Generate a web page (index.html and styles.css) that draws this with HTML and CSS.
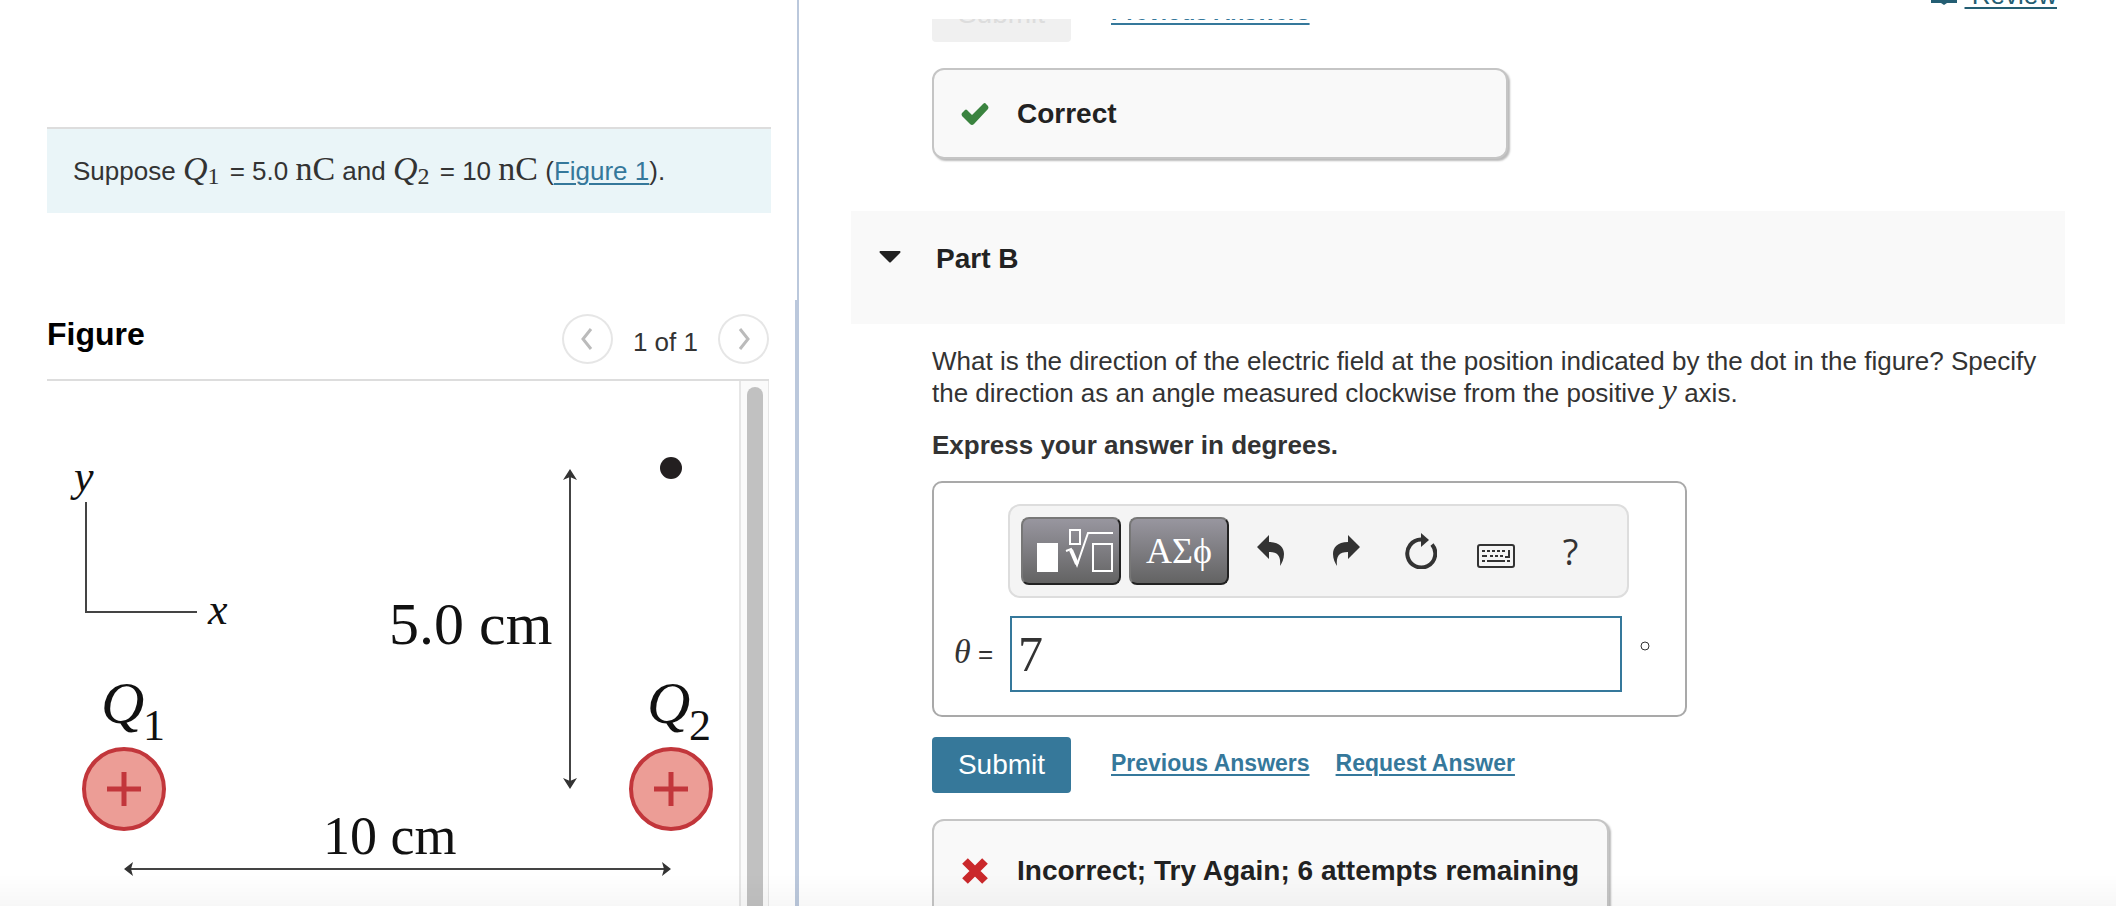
FILE: index.html
```
<!DOCTYPE html>
<html lang="en">
<head>
  <meta charset="UTF-8">
  <meta name="viewport" content="width=device-width, initial-scale=1.0">
  <title>Part B - Electric field of two charges</title>
  <link rel="stylesheet" href="styles.css">
</head>
<body>
  <div class="layout">
    <aside class="left">
      <section class="problem">
        <p class="intro">Suppose <span class="math"><i>Q</i><sub>1</sub></span> = 5.0 <span class="math">nC</span> and <span class="math"><i>Q</i><sub>2</sub></span> = 10 <span class="math">nC</span> (<a href="#figure">Figure 1</a>).</p>
      </section>

      <section class="figure-pane" id="figure">
        <div class="figure-head">
          <h2>Figure</h2>
          <div class="pager">
            <button type="button" aria-label="Previous figure">
              <svg width="14" height="24" viewBox="0 0 14 24"><path d="M11 2 3 12l8 10"/></svg>
            </button>
            <span>1 of 1</span>
            <button type="button" aria-label="Next figure">
              <svg width="14" height="24" viewBox="0 0 14 24"><path d="m3 2 8 10-8 10"/></svg>
            </button>
          </div>
        </div>
        <div class="figure-body">
          <svg class="diagram" viewBox="0 0 692 525" role="img" aria-label="Two positive charges 10 cm apart">
            <!-- axes -->
            <path class="line" d="M39 121v110h111"/>
            <text class="axis" x="27" y="110">y</text>
            <text class="axis" x="161" y="243">x</text>

            <!-- distances -->
            <path class="line" d="M523 94v308"/>
            <path class="head" d="m523 88 7 11-7-3-7 3zM523 408l7-11-7 3-7-3z"/>
            <path class="line" d="M84 488h534"/>
            <path class="head" d="m77 488 9-7-2 7 2 7zM624 488l-9-7 2 7-2 7z"/>
            <text class="dist" x="342" y="263">5.0 cm</text>
            <text class="dist small" x="276" y="473">10 cm</text>

            <circle class="dot" cx="624" cy="87" r="11"/>

            <!-- charges -->
            <text class="charge-name" x="54" y="342">Q</text>
            <text class="charge-sub" x="96" y="359">1</text>
            <text class="charge-name" x="600" y="342">Q</text>
            <text class="charge-sub" x="642" y="359">2</text>
            <circle class="charge" cx="77" cy="408" r="40"/>
            <path class="plus" d="M60 408h34M77 391v34"/>
            <circle class="charge" cx="624" cy="408" r="40"/>
            <path class="plus" d="M607 408h34M624 391v34"/>
          </svg>
          <div class="scrollbar"><div class="thumb"></div></div>
        </div>
      </section>
    </aside>

    <main class="right">
      <header class="topbar">
        <svg width="26" height="24" viewBox="0 0 26 24"><path d="M0 2q7-3 12 1h2q5-4 12-1v20H16l-3 2-3-2H0z"/></svg>
        <a href="#review">&nbsp;Review</a>
      </header>

      <div class="content">
        <div class="actions first">
          <button type="button" class="submit" disabled>Submit</button>
          <a href="#previous-a">Previous Answers</a>
        </div>
        <div class="feedback correct">
          <svg width="28" height="24" viewBox="0 0 28 24"><path fill="#3a833f" d="M1 11 4 8q1-1 2 0l5 5L22 2q2-2 3 0l2 2q1 2 0 3L13 22q-2 2-4 0L1 14q-1-2 0-3z"/></svg>
          <span>Correct</span>
        </div>

        <div class="part-head">
          <svg width="22" height="12" viewBox="0 0 22 12"><path d="M1 0h20q1 1 0 2l-9 9q-1 1-2 0L1 2q-1-1 0-2z"/></svg>
          <h1>Part B</h1>
        </div>

        <div class="part-body">
          <p>What is the direction of the electric field at the position indicated by the dot in the figure? Specify the direction as an angle measured clockwise from the positive <i class="math">y</i> axis.</p>
          <p class="instructions">Express your answer in degrees.</p>

          <div class="answer">
            <div class="toolbar">
              <button type="button" class="key" aria-label="Templates">
                <svg width="96" height="64" viewBox="1 2 96 64">
                  <path class="fill" d="M15 26h21v29H15z"/>
                  <path d="M48 13h10v14H48zM71 27h19v27H71zM44 34l5-2 6 16L66 16h25"/>
                  <path class="thick" d="m49 33 6 14"/>
                </svg>
              </button>
              <button type="button" class="key">ΑΣϕ</button>
              <button type="button" class="icon" aria-label="Undo">
                <svg width="28" height="32" viewBox="0 0 28 32"><path d="M0 12 12 0v7c11 0 15 6 15 12 0 5-2 9-4 12 1-10-2-14-11-14v7z"/></svg>
              </button>
              <button type="button" class="icon" aria-label="Redo">
                <svg width="28" height="32" viewBox="0 0 28 32"><path d="M28 12 16 0v7C5 7 1 13 1 19c0 5 2 9 4 12-1-10 2-14 11-14v7z"/></svg>
              </button>
              <button type="button" class="icon" aria-label="Reset">
                <svg width="32" height="36" viewBox="0 0 32 36"><path class="ring" d="M16 6.500a14 14 0 1 0 11 5"/><path d="m16 0 8 7-8 7z"/></svg>
              </button>
              <button type="button" class="icon keyboard" aria-label="Keyboard shortcuts">
                <svg width="38" height="24" viewBox="0 0 38 24">
                  <rect class="frame" x="1" y="1" width="36" height="22" rx="2"/>
                  <path d="M5 6h3v2H5zM10 6h3v2h-3zM15 6h3v2h-3zM20 6h3v2h-3zM25 6h3v2h-3zM31 6h2v8h-5v-2h3zM5 11h5v2H5zM13 11h3v2h-3zM18 11h3v2h-3zM23 11h3v2h-3zM5 16h3v2H5zM10 16h18v2H10zM30 16h3v2h-3z"/>
                </svg>
              </button>
              <button type="button" class="icon help" aria-label="Help">?</button>
            </div>
            <div class="entry">
              <label for="theta"><i class="math">θ</i> =</label>
              <input type="text" id="theta" value="7">
              <svg class="degree" width="10" height="10" viewBox="0 0 10 10"><circle cx="5" cy="5" r="4"/></svg>
            </div>
          </div>

          <div class="actions">
            <button type="button" class="submit">Submit</button>
            <a href="#previous-b">Previous Answers</a>
            <a href="#request">Request Answer</a>
          </div>
        </div>

        <div class="feedback incorrect">
          <svg width="28" height="28" viewBox="0 0 28 28"><path fill="none" stroke="#ca282b" stroke-width="8" d="m4 4 20 20M24 4 4 24"/></svg>
          <span>Incorrect; Try Again; 6 attempts remaining</span>
        </div>
      </div>
    </main>
  </div>
</body>
</html>
```
FILE: styles.css
```
* {
  box-sizing: border-box;
}
body {
  margin: 0;
  font-family: "Liberation Sans", Arial, sans-serif;
  font-size: 26px;
  line-height: 32px;
  color: #333;
  background: #fff;
  overflow: hidden;
}
body::after {
  content: "";
  position: fixed;
  left: 0;
  right: 0;
  bottom: 0;
  height: 32px;
  background: linear-gradient(rgba(0, 0, 0, 0), rgba(0, 0, 0, 0.03));
  pointer-events: none;
}
h1, h2, p {
  margin: 0;
}
a {
  color: #35789b;
  text-decoration-thickness: 2px;
  text-underline-offset: 3px;
}
button {
  font-family: inherit;
  padding: 0;
  cursor: pointer;
}
svg {
  display: block;
  flex: none;
}
.math {
  font-family: "Liberation Serif", "Times New Roman", serif;
  font-size: 34px;
  line-height: 26px;
}
.math sub {
  font-size: 24px;
  line-height: 0;
  vertical-align: -4px;
  margin-right: 3px;
}
.layout {
  display: flex;
  height: 100vh;
}

/* left side */
.left {
  flex: 0 0 799px;
  display: flex;
  flex-direction: column;
}
.problem {
  height: 300px;
  padding: 127px 26px 0 47px;
  border-right: 2px solid #bbc8dc;
}
.intro {
  padding: 26px;
  background: #eaf5f8;
  border-top: 2px solid #ddd;
}
.figure-pane {
  flex: 1;
  min-height: 0;
  display: flex;
  flex-direction: column;
  padding: 14px 26px 0 47px;
  border-right: 4px solid #bbc8dc;
}
.figure-head {
  display: flex;
  justify-content: space-between;
  align-items: flex-start;
  padding-bottom: 15px;
  border-bottom: 2px solid #ddd;
}
.figure-head h2 {
  font-size: 32px;
  line-height: 40px;
  color: #000;
}
.pager {
  display: flex;
  align-items: center;
  gap: 20px;
}
.pager span {
  padding-top: 6px;
}
.pager button {
  width: 51px;
  height: 50px;
  display: flex;
  align-items: center;
  justify-content: center;
  background: #fff;
  border: 2px solid #e6e6e6;
  border-radius: 50%;
}
.pager path {
  fill: none;
  stroke: #bbb;
  stroke-width: 3;
}
.figure-body {
  flex: 1;
  min-height: 0;
  display: flex;
  overflow: hidden;
}
.diagram {
  flex: 1;
  align-self: flex-start;
  font-family: "Liberation Serif", "Times New Roman", serif;
  fill: #111;
}
.diagram .line {
  fill: none;
  stroke: #444;
  stroke-width: 2;
}
.diagram .head {
  fill: #333;
}
.diagram .axis {
  font-size: 44px;
  font-style: italic;
}
.diagram .dist {
  font-size: 60px;
}
.diagram .small {
  font-size: 54px;
}
.diagram .dot {
  fill: #231f20;
}
.diagram .charge-name {
  font-size: 60px;
  font-style: italic;
}
.diagram .charge-sub {
  font-size: 44px;
}
.diagram .charge {
  fill: #ec9d96;
  stroke: #c2363b;
  stroke-width: 4;
}
.diagram .plus {
  stroke: #c2363b;
  stroke-width: 5;
}
.scrollbar {
  width: 30px;
  padding: 6px 5px 0 6px;
  background: #fafafa;
  border-left: 2px solid #e6e6e6;
  border-right: 1px solid #e6e6e6;
}
.thumb {
  height: 100%;
  background: #c1c1c1;
  border-radius: 8px 8px 0 0;
}

/* right side */
.right {
  flex: 1;
  min-width: 0;
  display: flex;
  flex-direction: column;
}
.topbar {
  flex: none;
  height: 19px;
  padding: 0 59px 8px 0;
  display: flex;
  justify-content: flex-end;
  align-items: flex-end;
  gap: 8px;
  overflow: hidden;
}
.topbar svg {
  margin-bottom: 6px;
  fill: #245e73;
}
.topbar a {
  color: #245e73;
}
.content {
  flex: 1;
  min-height: 0;
  padding: 0 51px 0 52px;
  overflow: hidden;
}
.actions {
  display: flex;
  align-items: center;
  margin-top: 20px;
}
.actions.first {
  margin: -33px 0 0 81px;
}
.actions a {
  margin-right: 26px;
  padding-bottom: 4px;
  font-size: 23px;
  font-weight: bold;
}
.submit {
  width: 139px;
  height: 56px;
  margin-right: 40px;
  font-size: 28px;
  color: #fff;
  background: #36789a;
  border: none;
  border-radius: 4px;
}
.submit:disabled {
  color: #ddd;
  background: #f0f0f0;
}
.feedback {
  display: flex;
  align-items: center;
  gap: 28px;
  width: 576px;
  height: 91px;
  margin: 26px 0 0 81px;
  padding: 0 27px;
  font-size: 28px;
  font-weight: bold;
  color: #222;
  background: #f9f9f9;
  border: 2px solid #c5c5c5;
  border-radius: 12px;
  box-shadow: 2px 2px 2px #bbb;
}
.feedback.incorrect {
  width: 677px;
  height: 104px;
}
.part-head {
  display: flex;
  align-items: flex-start;
  gap: 35px;
  height: 113px;
  margin-top: 52px;
  padding: 32px 28px;
  background: #f9f9f9;
}
.part-head svg {
  margin-top: 8px;
  fill: #222;
}
.part-head h1 {
  font-size: 28px;
  color: #222;
}
.part-body {
  padding: 21px 0 0 81px;
}
.instructions {
  margin: 20px 0;
  font-weight: bold;
}
.answer {
  width: 755px;
  max-width: 100%;
  padding: 21px 0 23px;
  border: 2px solid #a9a9a9;
  border-radius: 10px;
}
.toolbar {
  display: flex;
  gap: 8px;
  width: 621px;
  margin-left: 74px;
  padding: 11px;
  background: #f4f4f4;
  border: 2px solid #ddd;
  border-radius: 12px;
}
.key {
  width: 100px;
  height: 68px;
  font-family: "Liberation Serif", "Times New Roman", serif;
  font-size: 36px;
  color: #fff;
  background: linear-gradient(#98969f, #636363);
  border: 2px solid;
  border-color: #777 #222 #222 #777;
  border-radius: 8px;
}
.key path {
  fill: none;
  stroke: #fff;
  stroke-width: 2;
}
.key .fill {
  fill: #fff;
  stroke: none;
}
.key .thick {
  stroke-width: 4;
}
.icon {
  width: 67px;
  height: 68px;
  display: flex;
  align-items: center;
  justify-content: center;
  color: #333;
  background: none;
  border: none;
}
.icon svg {
  fill: #333;
}
.icon .ring {
  fill: none;
  stroke: #333;
  stroke-width: 4;
}
.icon .frame {
  fill: none;
  stroke: #333;
  stroke-width: 2;
}
.keyboard {
  padding-top: 10px;
}
.help {
  font-family: "Open Sans", sans-serif;
  font-size: 36px;
}
.entry {
  display: flex;
  align-items: center;
  margin-top: 18px;
}
.entry label {
  flex: 0 0 76px;
  padding-left: 20px;
}
.entry input {
  width: 612px;
  height: 76px;
  padding: 0 6px;
  font-family: "Liberation Serif", "Times New Roman", serif;
  font-size: 50px;
  color: #333;
  background: #fff;
  border: 2px solid #35789b;
  outline: none;
}
.degree {
  margin: 0 0 16px 18px;
  fill: none;
  stroke: #333;
  stroke-width: 1;
}
```
